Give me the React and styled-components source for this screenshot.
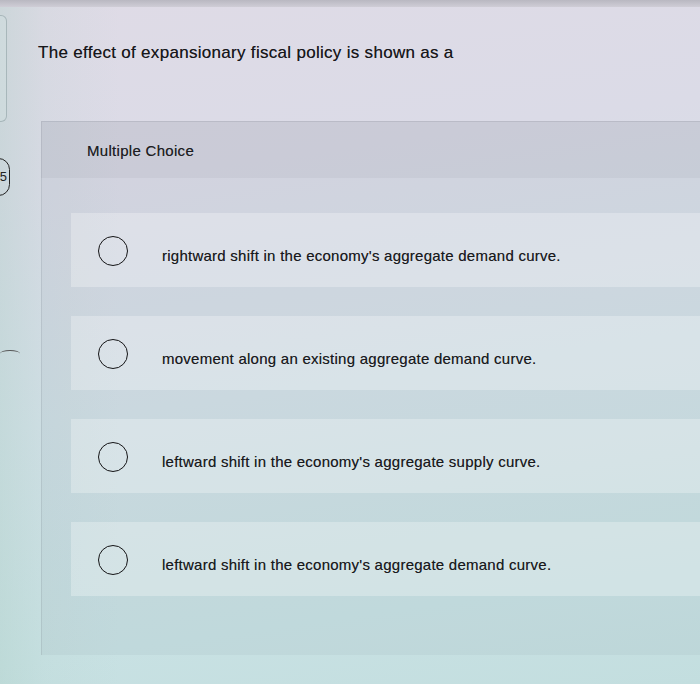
import React from "react";
import styled, { createGlobalStyle } from "styled-components";

const Global = createGlobalStyle`
  html, body { margin: 0; padding: 0; }
  body { width: 700px; height: 684px; overflow: hidden; }
`;

const Screen = styled.div`
  width: 700px;
  height: 684px;
  overflow: hidden;
  display: flex;
  flex-direction: column;
  font-family: "Liberation Sans", Arial, sans-serif;
  color: #1c1c1f;
  background:
    linear-gradient(90deg, rgba(170, 205, 195, 0.35) 0px, rgba(170, 205, 195, 0.12) 45px, rgba(0,0,0,0) 120px),
    linear-gradient(172deg, #dfdbe6 0%, #dbdbe7 25%, #d2e0e7 55%, #c8e1e3 85%, #c3dedf 100%);
`;

const TopStrip = styled.div`
  height: 7px;
  flex: none;
  background: linear-gradient(180deg, #b9b8c1, #cfcdd6);
`;

const Body = styled.div`
  flex: 1;
  display: flex;
  min-height: 0;
`;

const Sidebar = styled.div`
  width: 38px;
  flex: none;
  display: flex;
  flex-direction: column;
`;

const PrevCard = styled.div`
  margin: 8px 0 0 -34px;
  width: 39px;
  height: 105px;
  border: 1px solid rgba(120, 140, 145, 0.45);
  border-radius: 6px;
  background: rgba(210, 225, 226, 0.4);
`;

const Badge = styled.div`
  margin: 36px 0 0 -13px;
  width: 19px;
  height: 36px;
  border: 1.6px solid #222;
  border-radius: 18px;
  font-size: 13px;
  line-height: 36px;
  text-align: right;
  padding-right: 2px;
  box-sizing: content-box;
  color: #222;
  overflow: hidden;
`;

const Tick = styled.div`
  margin: 154px 0 0 0;
  width: 20px;
  height: 6px;
  border-top: 1px solid #555;
  border-radius: 50% 50% 0 0;
`;

const Main = styled.div`
  flex: 1;
  display: flex;
  flex-direction: column;
  min-width: 0;
`;

const Question = styled.div`
  margin-top: 36px;
  font-size: 17px;
  line-height: 20px;
  letter-spacing: 0.3px;
  color: #17171a;
  text-shadow: 0 0 0.6px rgba(20, 20, 25, 0.6);
`;

const Panel = styled.div`
  margin: 58px 0 0 3px;
  height: 534px;
  background: rgba(95, 110, 125, 0.07);
  display: flex;
  flex-direction: column;
  box-shadow: inset 1px 1px 0 rgba(120, 130, 140, 0.2);
`;

const PanelHeader = styled.div`
  height: 57px;
  flex: none;
  display: flex;
  align-items: center;
  padding-left: 46px;
  padding-top: 2px;
  box-sizing: border-box;
  font-size: 15px;
  letter-spacing: 0.3px;
  color: #1d1d22;
  background: rgba(110, 110, 125, 0.08);
  text-shadow: 0 0 0.5px rgba(20, 20, 25, 0.5);
`;

const Options = styled.div`
  margin-top: 35px;
  padding-left: 30px;
  display: flex;
  flex-direction: column;
  gap: 29px;
`;

const Option = styled.div`
  height: 74px;
  display: flex;
  align-items: center;
  padding-left: 27px;
  background: rgba(255, 255, 255, 0.28);
`;

const Radio = styled.span`
  flex: none;
  width: 28px;
  height: 28px;
  border: 1.7px solid #141416;
  border-radius: 50%;
  margin-top: 2px;
`;

const OptionText = styled.span`
  margin: 11px 0 0 34px;
  font-size: 15px;
  letter-spacing: 0.25px;
  color: #1a1a1d;
  text-shadow: 0 0 0.5px rgba(20, 20, 25, 0.5);
`;

const options = [
  "rightward shift in the economy's aggregate demand curve.",
  "movement along an existing aggregate demand curve.",
  "leftward shift in the economy's aggregate supply curve.",
  "leftward shift in the economy's aggregate demand curve.",
];

export default function App() {
  return (
    <Screen>
      <Global />
      <TopStrip />
      <Body>
        <Sidebar>
          <PrevCard />
          <Badge>5</Badge>
          <Tick />
        </Sidebar>
        <Main>
          <Question>The effect of expansionary fiscal policy is shown as a</Question>
          <Panel>
            <PanelHeader>Multiple Choice</PanelHeader>
            <Options>
              {options.map((t) => (
                <Option key={t}>
                  <Radio />
                  <OptionText>{t}</OptionText>
                </Option>
              ))}
            </Options>
          </Panel>
        </Main>
      </Body>
    </Screen>
  );
}
